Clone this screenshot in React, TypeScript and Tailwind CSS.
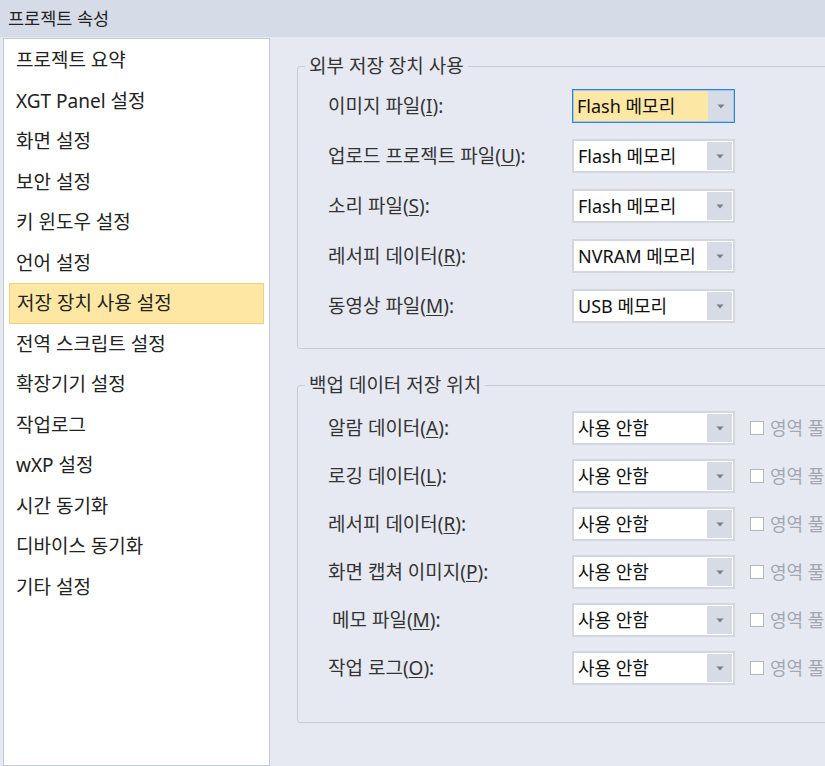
import React from "react";

const FONT = { fontFamily: '"Noto Sans", "Noto Sans CJK KR", sans-serif' };

const navItems = [
  "프로젝트 요약",
  "XGT Panel 설정",
  "화면 설정",
  "보안 설정",
  "키 윈도우 설정",
  "언어 설정",
  "저장 장치 사용 설정",
  "전역 스크립트 설정",
  "확장기기 설정",
  "작업로그",
  "wXP 설정",
  "시간 동기화",
  "디바이스 동기화",
  "기타 설정",
];

function Arrow() {
  return (
    <svg width="8" height="5" viewBox="0 0 8 5">
      <path d="M0.5 0.5 L7.5 0.5 L4 4.5 Z" fill="#7a7d85" />
    </svg>
  );
}

function Combo({ value, focused }: { value: string; focused?: boolean }) {
  return (
    <div
      className={
        "flex h-[34px] w-[163px] shrink-0 items-stretch " +
        (focused
          ? "border border-[#2f83d8] bg-[#fde7a4] shadow-[inset_0_0_0_1px_#9cc8f0]"
          : "border-2 border-[#d3d6dd] bg-white")
      }
    >
      <div className="flex flex-1 items-center whitespace-nowrap pl-[4px] text-[18px] leading-none text-[#111]">
        {value}
      </div>
      <div className="my-[1px] mr-[1px] flex w-[25px] items-center justify-center bg-[#d7dbe5]">
        <Arrow />
      </div>
    </div>
  );
}

function Label({ pre, key_, indent }: { pre: string; key_: string; indent?: boolean }) {
  return (
    <div
      className={
        "w-[244px] shrink-0 whitespace-nowrap text-[19px] leading-none text-[#333] " +
        (indent ? "pl-[4px]" : "")
      }
    >
      {pre}(<span className="underline underline-offset-2">{key_}</span>):
    </div>
  );
}

function Row1({ pre, k, v, focused }: { pre: string; k: string; v: string; focused?: boolean }) {
  return (
    <div className="flex items-center">
      <Label pre={pre} key_={k} />
      <Combo value={v} focused={focused} />
    </div>
  );
}

function Row2({ pre, k, indent }: { pre: string; k: string; indent?: boolean }) {
  return (
    <div className="flex items-center">
      <Label pre={pre} key_={k} indent={indent} />
      <Combo value="사용 안함" />
      <div className="ml-[15px] flex shrink-0 items-center whitespace-nowrap">
        <div className="h-[14px] w-[14px] border border-[#b5b8c0] bg-white" />
        <span className="ml-[6px] text-[18px] leading-none text-[#a3a7b1]">영역 풀</span>
      </div>
    </div>
  );
}

export default function App() {
  return (
    <div
      className="flex h-[766px] w-[825px] flex-col overflow-hidden bg-[#e6e9f2]"
      style={FONT}
    >
      <div className="flex h-[37px] shrink-0 items-center bg-[#d6dbe8] pl-[8px] text-[17.5px] text-[#222]">
        프로젝트 속성
      </div>
      <div className="flex min-h-0 flex-1">
        <div className="ml-[3px] mt-[1px] w-[267px] shrink-0 border border-[#c5c9d2] bg-white pt-[1px]">
          {navItems.map((item, i) => (
            <div
              key={item}
              className={
                "flex h-[40.5px] items-center whitespace-nowrap text-[19px] text-[#222] " +
                (i === 6
                  ? "mx-[5px] border border-[#f0d27e] bg-[#fee7a3] pl-[7px]"
                  : "pl-[12px]")
              }
            >
              {item}
            </div>
          ))}
        </div>
        <div className="flex min-w-0 flex-1 flex-col pl-[27px] pt-[16px]">
          <fieldset className="mr-[-20px] rounded-[3px] border border-[#c8ccd6] pb-[25px] pl-[30px] pt-[10px]">
            <legend className="ml-[-23px] px-[4px] text-[19px] leading-[26px] text-[#333]">
              외부 저장 장치 사용
            </legend>
            <div className="flex flex-col gap-[16px]">
              <Row1 pre="이미지 파일" k="I" v="Flash 메모리" focused />
              <Row1 pre="업로드 프로젝트 파일" k="U" v="Flash 메모리" />
              <Row1 pre="소리 파일" k="S" v="Flash 메모리" />
              <Row1 pre="레서피 데이터" k="R" v="NVRAM 메모리" />
              <Row1 pre="동영상 파일" k="M" v="USB 메모리" />
            </div>
          </fieldset>
          <fieldset className="mr-[-120px] mt-[23px] rounded-[3px] border border-[#c8ccd6] pb-[37px] pl-[30px] pt-[13px]">
            <legend className="ml-[-23px] px-[4px] text-[19px] leading-[26px] text-[#333]">
              백업 데이터 저장 위치
            </legend>
            <div className="flex flex-col gap-[14px]">
              <Row2 pre="알람 데이터" k="A" />
              <Row2 pre="로깅 데이터" k="L" />
              <Row2 pre="레서피 데이터" k="R" />
              <Row2 pre="화면 캡쳐 이미지" k="P" />
              <Row2 pre="메모 파일" k="M" indent />
              <Row2 pre="작업 로그" k="O" />
            </div>
          </fieldset>
        </div>
      </div>
    </div>
  );
}
